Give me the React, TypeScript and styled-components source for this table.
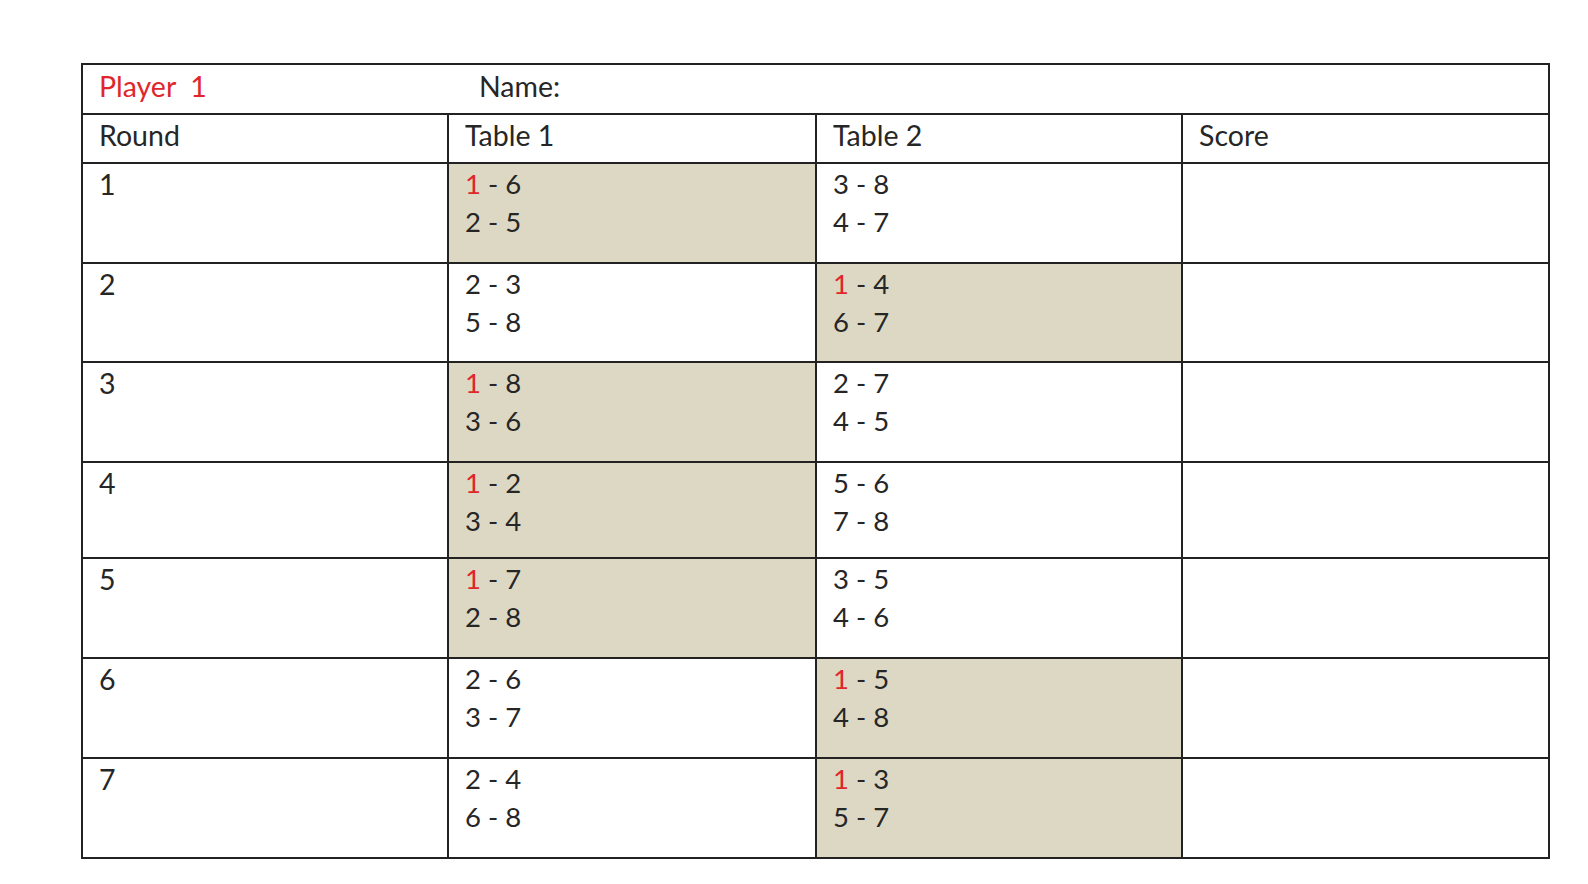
import React from "react";
import styled, { createGlobalStyle } from "styled-components";

const GlobalStyle = createGlobalStyle`
  html, body {
    margin: 0;
    padding: 0;
    background: #ffffff;
  }
  body {
    font-family: Lato, "Open Sans", "Liberation Sans", sans-serif;
    color: #262626;
  }
`;

const Page = styled.div`
  width: 1588px;
  height: 884px;
  padding: 63px 0 0 81px;
  box-sizing: border-box;
`;

const Sheet = styled.table`
  border-collapse: collapse;
  table-layout: fixed;
  width: 1467px;
  font-size: 28.5px;
  line-height: 38px;
`;

const Row = styled.tr<{ $h: number }>`
  height: ${(p) => p.$h}px;
`;

const Cell = styled.td<{ $shaded?: boolean }>`
  border: 2px solid #222222;
  padding: 1px 16px 0 16px;
  vertical-align: top;
  background: ${(p) => (p.$shaded ? "#ddd8c3" : "#ffffff")};
  box-sizing: border-box;
`;

const TitleCell = styled.td`
  border: 2px solid #222222;
  padding: 0 16px;
  vertical-align: top;
`;

const TitleBar = styled.div`
  display: flex;
  align-items: center;
  height: 42px;
`;

const PlayerLabel = styled.span`
  color: #e0262a;
  white-space: pre;
  width: 380px;
`;

const MatchLine = styled.div`
  font-size: 27.5px;
`;

const Red = styled.span`
  color: #e0262a;
`;

type Pair = [number, number];

const rounds: { t1: Pair[]; t2: Pair[]; h: number }[] = [
  { t1: [[1, 6], [2, 5]], t2: [[3, 8], [4, 7]], h: 100 },
  { t1: [[2, 3], [5, 8]], t2: [[1, 4], [6, 7]], h: 99 },
  { t1: [[1, 8], [3, 6]], t2: [[2, 7], [4, 5]], h: 100 },
  { t1: [[1, 2], [3, 4]], t2: [[5, 6], [7, 8]], h: 96 },
  { t1: [[1, 7], [2, 8]], t2: [[3, 5], [4, 6]], h: 100 },
  { t1: [[2, 6], [3, 7]], t2: [[1, 5], [4, 8]], h: 100 },
  { t1: [[2, 4], [6, 8]], t2: [[1, 3], [5, 7]], h: 100 },
];

const Matches = ({ pairs }: { pairs: Pair[] }) => (
  <>
    {pairs.map(([a, b], i) => (
      <MatchLine key={i}>
        {a === 1 ? <Red>1</Red> : a} - {b}
      </MatchLine>
    ))}
  </>
);

const hasPlayer = (pairs: Pair[]) => pairs.some(([a]) => a === 1);

export default function App() {
  return (
    <>
      <GlobalStyle />
      <Page>
        <Sheet>
          <colgroup>
            <col style={{ width: 366 }} />
            <col style={{ width: 368 }} />
            <col style={{ width: 366 }} />
            <col style={{ width: 367 }} />
          </colgroup>
          <tbody>
            <Row $h={50}>
              <TitleCell colSpan={4}>
                <TitleBar>
                  <PlayerLabel>Player  1</PlayerLabel>
                  <span>Name:</span>
                </TitleBar>
              </TitleCell>
            </Row>
            <Row $h={49}>
              <Cell>Round</Cell>
              <Cell>Table 1</Cell>
              <Cell>Table 2</Cell>
              <Cell>Score</Cell>
            </Row>
            {rounds.map((r, i) => (
              <Row key={i} $h={r.h}>
                <Cell>{i + 1}</Cell>
                <Cell $shaded={hasPlayer(r.t1)}>
                  <Matches pairs={r.t1} />
                </Cell>
                <Cell $shaded={hasPlayer(r.t2)}>
                  <Matches pairs={r.t2} />
                </Cell>
                <Cell />
              </Row>
            ))}
          </tbody>
        </Sheet>
      </Page>
    </>
  );
}
